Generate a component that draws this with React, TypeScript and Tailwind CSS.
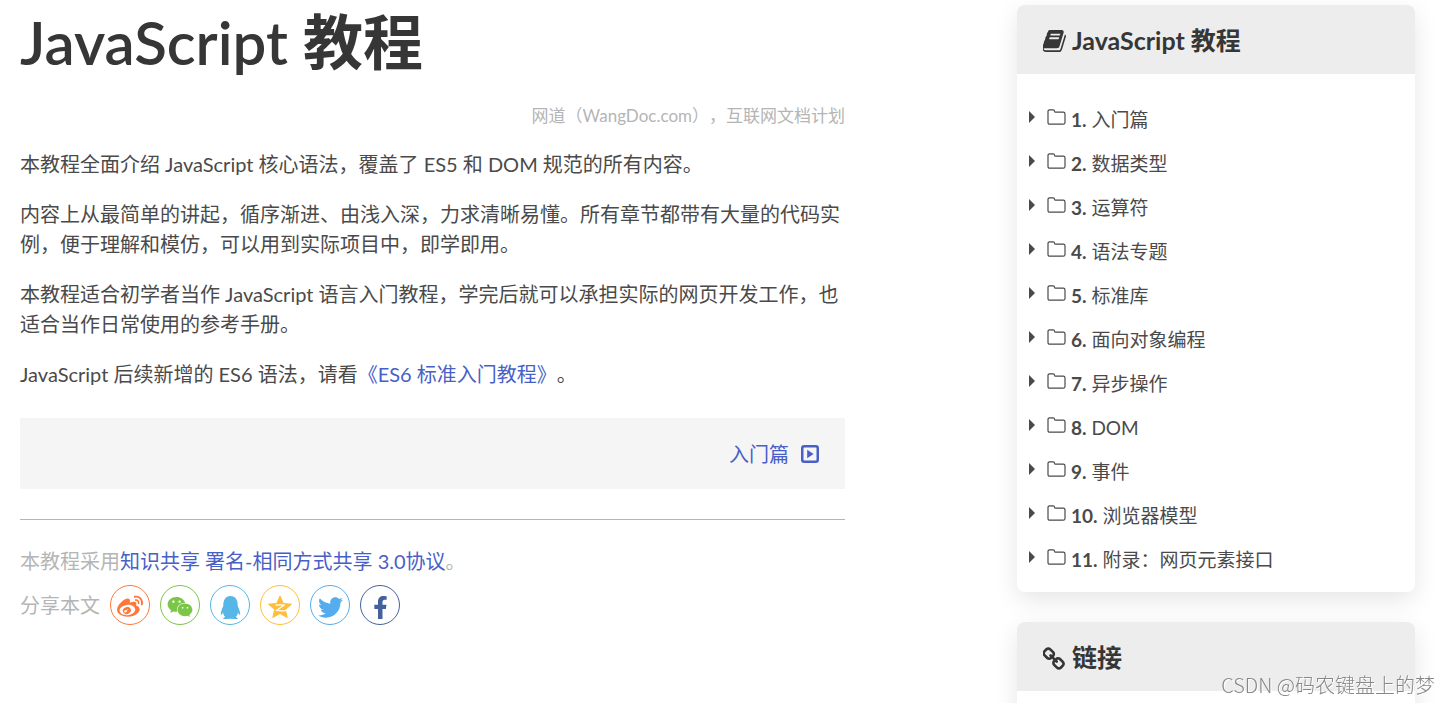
import type { ReactNode } from 'react';
import { FaFacebookF, FaQq, FaTwitter, FaWeibo, FaWeixin } from 'react-icons/fa';

const chapters = [
  '入门篇',
  '数据类型',
  '运算符',
  '语法专题',
  '标准库',
  '面向对象编程',
  '异步操作',
  'DOM',
  '事件',
  '浏览器模型',
  '附录：网页元素接口',
];

function BookIcon() {
  return (
    <svg viewBox="64 128 1600 1536" className="h-[22px] w-[23px]" fill="currentColor" aria-hidden="true">
      <path d="M1639 478q40 57 18 129l-275 906q-19 64-76.5 107.5t-122.5 43.5h-923q-77 0-148.5-53.5t-99.5-131.5q-24-67-2-127 0-4 3-27t4-37q1-8-3-21.5t-3-19.5q2-11 8-21t16.5-23.5 16.5-23.5q23-38 45-91.5t30-91.5q3-10 .5-30t-.5-28q3-11 17-28t17-23q21-36 42-92t25-90q1-9-2.5-32t.5-28q4-13 22-30.5t22-22.5q19-26 42.5-84.5t27.5-96.5q1-8-3-25.5t-2-26.5q2-8 9-18t18-23 17-21q8-12 16.5-30.5t15-35 16-36 19.5-32 26.5-23.5 36-11.5 47.5 5.5l-1 3q38-9 51-9h761q74 0 114 56t18 130l-274 906q-36 119-71.5 153.5t-128.5 34.5h-869q-27 0-38 15-11 16-1 43 24 70 144 70h923q29 0 56-15.5t35-41.5l300-987q7-22 5-57 38 15 59 43zm-1064 2q-4 13 2 22.5t20 9.5h608q13 0 25.5-9.5t16.5-22.5l21-64q4-13-2-22.5t-20-9.5h-608q-13 0-25.5 9.5t-16.5 22.5zm-83 256q-4 13 2 22.5t20 9.5h608q13 0 25.5-9.5t16.5-22.5l21-64q4-13-2-22.5t-20-9.5h-608q-13 0-25.5 9.5t-16.5 22.5z" />
    </svg>
  );
}

function ChainIcon() {
  return (
    <svg viewBox="64 0 1664 1664" className="h-[23px] w-[23px]" fill="currentColor" aria-hidden="true">
      <path d="M1456 1216q0-40-28-68l-208-208q-28-28-68-28-42 0-72 32 3 3 19 18.5t21.5 21.5 15 19 13 25.5 3.5 27.5q0 40-28 68t-68 28q-15 0-27.5-3.5t-25.5-13-19-15-21.5-21.5-18.5-19q-33 31-33 73 0 40 28 68l206 207q27 27 68 27 40 0 68-26l147-146q28-28 28-67zm-703-705q0-40-28-68l-206-207q-28-28-68-28-39 0-68 27l-147 146q-28 28-28 67 0 40 28 68l208 208q27 27 68 27 42 0 72-31-3-3-19-18.5t-21.5-21.5-15-19-13-25.5-3.5-27.5q0-40 28-68t68-28q15 0 27.5 3.5t25.5 13 19 15 21.5 21.5 18.5 19q33-31 33-73zm895 705q0 120-85 203l-147 146q-83 83-203 83-121 0-204-85l-206-207q-83-83-83-203 0-123 88-209l-88-88q-86 88-208 88-120 0-204-84l-208-208q-84-84-84-204t85-203l147-146q83-83 203-83 121 0 204 85l206 207q83 83 83 203 0 123-88 209l88 88q86-88 208-88 120 0 204 84l208 208q84 84 84 204z" />
    </svg>
  );
}

function FolderIcon() {
  return (
    <svg viewBox="0 0 19 16" className="h-4 w-[19px]" fill="none" stroke="currentColor" strokeWidth="1.2" aria-hidden="true">
      <path d="M1 2.6Q1 .8 2.8.8H6Q7.6.8 7.6 2.4 7.6 3.2 8.6 3.2H16.2Q18 3.2 18 5V13.4Q18 15.2 16.2 15.2H2.8Q1 15.2 1 13.4Z" />
    </svg>
  );
}

function NextIcon() {
  return (
    <svg viewBox="0 0 18 18" className="h-[18px] w-[18px]" aria-hidden="true">
      <rect x="1.25" y="1.25" width="15.5" height="15.5" rx="2" fill="none" stroke="currentColor" strokeWidth="2.5" />
      <path d="M6.2 4.8v8.4L12.6 9z" fill="currentColor" />
    </svg>
  );
}

function QzoneIcon() {
  return (
    <svg viewBox="0 0 24 24" className="h-6 w-6" aria-hidden="true">
      <path
        d="M12 1l3.3 7.4 8.2.8-6.2 5.4 1.9 8L12 18.4l-7.2 4.2 1.9-8L.5 9.2l8.2-.8z"
        fill="currentColor"
        stroke="currentColor"
        strokeLinejoin="round"
      />
      <path d="M7.5 10.2q4-.6 8.5 0L8.5 15.5q5 .9 10.5-.2" fill="none" stroke="#fff" strokeWidth="1.2" />
    </svg>
  );
}

const shares = [
  { name: '微博', color: 'border-[#ff763b] text-[#ff763b]', icon: <FaWeibo size={26} /> },
  { name: '微信', color: 'border-[#7bc549] text-[#7bc549]', icon: <FaWeixin size={26} /> },
  { name: 'QQ', color: 'border-[#56b6e7] text-[#56b6e7]', icon: <FaQq size={23} /> },
  { name: 'QQ空间', color: 'border-[#fdbe3d] text-[#fdbe3d]', icon: <QzoneIcon /> },
  { name: 'Twitter', color: 'border-[#55acee] text-[#55acee]', icon: <FaTwitter size={25} /> },
  { name: 'Facebook', color: 'border-[#44619d] text-[#44619d]', icon: <FaFacebookF size={23} /> },
];

function Card({ icon, title, children }: { icon: ReactNode; title: string; children?: ReactNode }) {
  return (
    <section className="overflow-hidden rounded-lg bg-white shadow-[0_8px_24px_rgba(10,10,10,0.1)]">
      <h2 className="flex h-[69px] items-center gap-[6px] bg-[#ededed] px-[26px] pt-[3px] text-[25px] font-bold text-[#363636]">
        {icon}
        {title}
      </h2>
      <div className="min-h-20 px-3 pt-6 pb-[10px]">{children}</div>
    </section>
  );
}

export default function App() {
  return (
    <div
      lang="zh-CN"
      className="flex h-screen justify-between gap-10 overflow-hidden bg-white pr-9 pl-5 font-[Lato,'Noto_Sans_CJK_SC',sans-serif] text-[#4a4a4a] [text-spacing-trim:space-all]"
    >
      <main className="w-full max-w-[825px] text-xl leading-[30px]">
        <h1 className="pt-[6px] text-[60px] leading-[72px] font-semibold text-[#363636]">JavaScript 教程</h1>
        <p className="mt-[23px] text-right text-[17px] text-[#b5b5b5]">网道（WangDoc.com），互联网文档计划</p>

        <article className="mt-[18px] space-y-5">
          <p>本教程全面介绍 JavaScript 核心语法，覆盖了 ES5 和 DOM 规范的所有内容。</p>
          <p>
            内容上从最简单的讲起，循序渐进、由浅入深，力求清晰易懂。所有章节都带有大量的代码实例，便于理解和模仿，可以用到实际项目中，即学即用。
          </p>
          <p>
            本教程适合初学者当作 JavaScript 语言入门教程，学完后就可以承担实际的网页开发工作，也适合当作日常使用的参考手册。
          </p>
          <p>
            JavaScript 后续新增的 ES6 语法，请看
            <a href="#es6" className="text-[#485fc7]">
              《ES6 标准入门教程》
            </a>
            。
          </p>
        </article>

        <nav className="mt-[29px] flex h-[71px] items-center justify-end bg-[#f5f5f5] px-[26px]">
          <a href="#basic" className="flex items-center gap-3 text-[#485fc7]">
            入门篇
            <NextIcon />
          </a>
        </nav>

        <hr className="mt-[30px] border-[#b5b5b5]" />

        <footer className="mt-[26px] text-[#b5b5b5]">
          <p>
            本教程采用
            <a href="#license" className="text-[#485fc7]">
              知识共享 署名-相同方式共享 3.0协议
            </a>
            。
          </p>
          <div className="mt-[9px] flex items-center gap-[10px]">
            <span>分享本文</span>
            {shares.map((share) => (
              <a
                key={share.name}
                href="#share"
                aria-label={share.name}
                className={`flex h-10 w-10 items-center justify-center rounded-full border pt-1 ${share.color}`}
              >
                {share.icon}
              </a>
            ))}
          </div>
        </footer>
      </main>

      <aside className="w-[398px] shrink-0 space-y-[30px] pt-[5px]">
        <Card icon={<BookIcon />} title="JavaScript 教程">
          <ol>
            {chapters.map((chapter, index) => (
              <li key={chapter} className="flex h-11 items-center text-[19px]">
                <button type="button" aria-label={`展开 ${chapter}`} className="mr-3 mb-[6px]">
                  <svg viewBox="0 0 6 12" className="h-3 w-[6px]" fill="currentColor" aria-hidden="true">
                    <path d="M0 0v12l6-6z" />
                  </svg>
                </button>
                <a href="#chapter" className="flex items-center gap-[5px]">
                  <span className="mb-[6px]">
                    <FolderIcon />
                  </span>
                  <span>
                    <b>{index + 1}.</b> {chapter}
                  </span>
                </a>
              </li>
            ))}
          </ol>
        </Card>
        <Card icon={<ChainIcon />} title="链接" />
      </aside>

      <div className="pointer-events-none fixed right-4 bottom-1 font-['Noto_Sans_CJK_SC',sans-serif] text-xl font-light text-[#888] [text-shadow:1px_1px_0_#fff]">
        CSDN @码农键盘上的梦
      </div>
    </div>
  );
}
